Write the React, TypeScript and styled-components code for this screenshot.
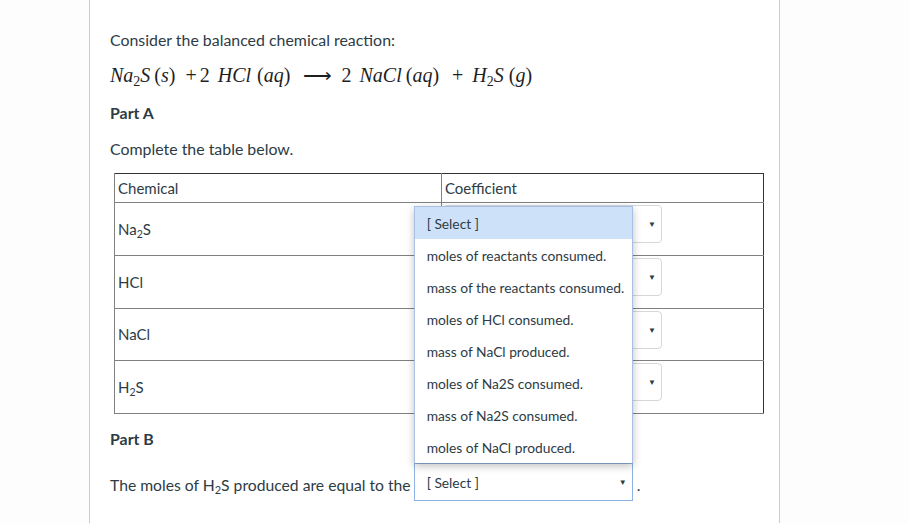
import React from "react";
import styled, { createGlobalStyle } from "styled-components";

const Global = createGlobalStyle`
  html, body { margin: 0; padding: 0; background: #fdfdfd; }
  body { font-family: Lato, "Open Sans", sans-serif; color: #2d3b45; }
`;

const Page = styled.div`
  height: 523px;
  overflow: hidden;
  padding-left: 89px;
`;

const Card = styled.div`
  width: 691px;
  height: 523px;
  background: #fff;
  border-left: 1px solid #c7cdd1;
  border-right: 1px solid #c7cdd1;
  padding: 30px 15px 0 20px;
  box-sizing: border-box;
`;

const Para = styled.p<{ $bold?: boolean; $mt: number }>`
  margin: ${(p) => p.$mt}px 0 0 0;
  font-size: 15.9px;
  line-height: 20px;
  font-weight: ${(p) => (p.$bold ? 700 : 400)};
`;

const Equation = styled.div`
  margin-top: 13px;
  height: 24px;
  font-family: "Liberation Serif", serif;
  font-size: 20px;
  line-height: 24px;
  white-space: nowrap;
  color: #1f1f1f;
`;

const Var = styled.i<{ $ml?: number }>`
  font-style: italic;
  margin-left: ${(p) => p.$ml ?? 0}px;
`;

const Up = styled.span<{ $ml?: number }>`
  font-style: normal;
  margin-left: ${(p) => p.$ml ?? 0}px;
`;

const Sub = styled.sub`
  font-size: 0.7em;
  vertical-align: -0.25em;
  line-height: 0;
`;

const Table = styled.table`
  margin: 14px 0 0 4px;
  width: 650px;
  border-collapse: collapse;
  border: 1px solid #333;
  font-size: 15px;
`;

const Th = styled.th<{ $w?: number }>`
  text-align: left;
  font-weight: 400;
  height: 28px;
  padding: 0 3px;
  border-left: 1px solid #808080;
  border-bottom: 1px solid #808080;
  width: ${(p) => (p.$w ? `${p.$w}px` : "auto")};
`;

const Td = styled.td<{ $top?: boolean }>`
  height: 52.8px;
  box-sizing: border-box;
  padding: ${(p) => (p.$top ? "2px 0 0 1px" : "0 3px")};
  vertical-align: ${(p) => (p.$top ? "top" : "middle")};
  border-left: 1px solid #808080;
  border-bottom: 1px solid #808080;
`;

const SelectBox = styled.div<{ $focus?: boolean }>`
  position: relative;
  box-sizing: border-box;
  width: 219px;
  height: 38px;
  border: 1px solid ${(p) => (p.$focus ? "#8fb2e4" : "#d4d8db")};
  border-radius: ${(p) => (p.$focus ? "0" : "4px")};
  background: #fff;
  display: flex;
  align-items: center;
  justify-content: space-between;
  padding: 0 5px 0 12px;
  font-size: 13.8px;
`;

const Arrow = styled.span`
  font-size: 8px;
  color: #2d3b45;
  margin-left: auto;
`;

const Line = styled.div`
  margin-top: 14px;
  display: flex;
  align-items: center;
  font-size: 15.7px;
  white-space: nowrap;
`;

const LineText = styled.span`
  padding-top: 6px;
`;

const InlineSelect = styled.div`
  position: relative;
  margin-left: 3px;
`;

const Menu = styled.ul`
  position: absolute;
  left: 0;
  bottom: 100%;
  margin: 0;
  padding: 0;
  list-style: none;
  width: 219px;
  box-sizing: border-box;
  background: #fff;
  border: 1px solid #a9c0e4;
  border-bottom: none;
  box-shadow: 0 3px 8px rgba(0, 0, 0, 0.25);
  z-index: 5;
`;

const Option = styled.li<{ $active?: boolean }>`
  height: 32px;
  display: flex;
  align-items: center;
  padding-left: 12px;
  font-size: 13.8px;
  background: ${(p) => (p.$active ? "#cde2f8" : "#fff")};
`;

const Dot = styled.span`
  margin-left: 4px;
  margin-top: 6px;
`;

const options = [
  "[ Select ]",
  "moles of reactants consumed.",
  "mass of the reactants consumed.",
  "moles of HCl consumed.",
  "mass of NaCl produced.",
  "moles of Na2S consumed.",
  "mass of Na2S consumed.",
  "moles of NaCl produced.",
];

const chemicals: React.ReactNode[] = [
  <>Na<Sub>2</Sub>S</>,
  <>HCl</>,
  <>NaCl</>,
  <>H<Sub>2</Sub>S</>,
];

export default function App() {
  return (
    <>
      <Global />
      <Page>
        <Card>
          <Para $mt={0}>Consider the balanced chemical reaction:</Para>
          <Equation>
            <Var>Na</Var>
            <Sub>2</Sub>
            <Var>S</Var>
            <Up $ml={4}>(</Up>
            <Var>s</Var>
            <Up>)</Up>
            <Up $ml={10}>+</Up>
            <Up $ml={3}>2</Up>
            <Var $ml={8}>HCl</Var>
            <Up $ml={6}>(</Up>
            <Var>aq</Var>
            <Up>)</Up>
            <Up $ml={13}>⟶</Up>
            <Up $ml={9}>2</Up>
            <Var $ml={8}>NaCl</Var>
            <Up $ml={4}>(</Up>
            <Var>aq</Var>
            <Up>)</Up>
            <Up $ml={13}>+</Up>
            <Var $ml={9}>H</Var>
            <Sub>2</Sub>
            <Var>S</Var>
            <Up $ml={5}>(</Up>
            <Var>g</Var>
            <Up>)</Up>
          </Equation>
          <Para $bold $mt={16}>Part A</Para>
          <Para $mt={16}>Complete the table below.</Para>
          <Table>
            <thead>
              <tr>
                <Th $w={320}>Chemical</Th>
                <Th>Coefficient</Th>
              </tr>
            </thead>
            <tbody>
              {chemicals.map((c, i) => (
                <tr key={i}>
                  <Td>{c}</Td>
                  <Td $top>
                    <SelectBox>
                      <Arrow>▼</Arrow>
                    </SelectBox>
                  </Td>
                </tr>
              ))}
            </tbody>
          </Table>
          <Para $bold $mt={15}>Part B</Para>
          <Line>
            <LineText>
              The moles of H<Sub>2</Sub>S produced are equal to the
            </LineText>
            <InlineSelect>
              <Menu>
                {options.map((o, i) => (
                  <Option key={o} $active={i === 0}>
                    {o}
                  </Option>
                ))}
              </Menu>
              <SelectBox $focus>
                <span>[ Select ]</span>
                <Arrow>▼</Arrow>
              </SelectBox>
            </InlineSelect>
            <Dot>.</Dot>
          </Line>
        </Card>
      </Page>
    </>
  );
}
